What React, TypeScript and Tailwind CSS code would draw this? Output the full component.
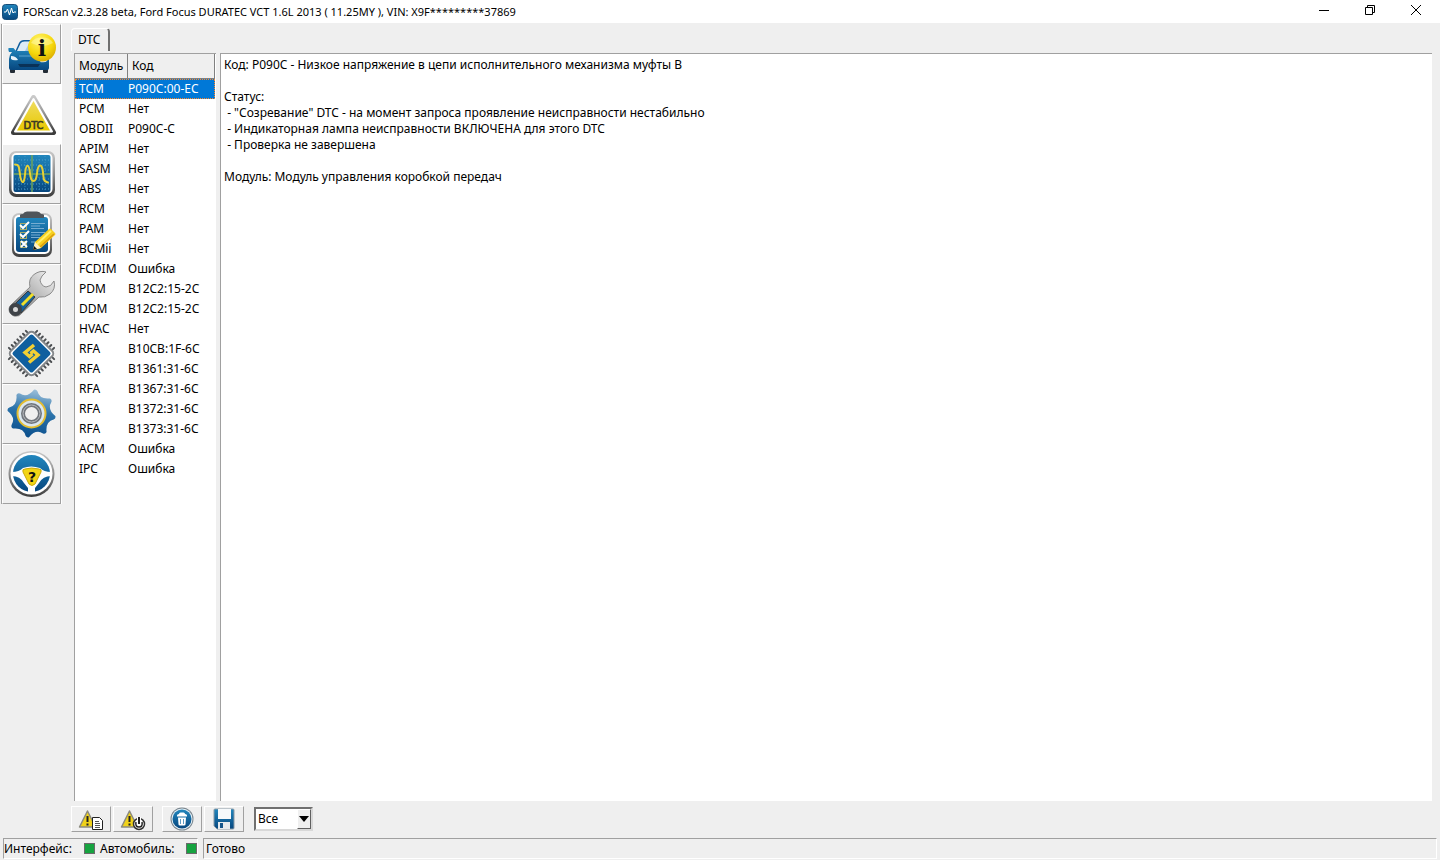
import React, { useState } from "react";
import clsx from "clsx";

interface DtcRow {
  module: string;
  code: string;
}

const ROWS: DtcRow[] = [
  { module: "TCM", code: "P090C:00-EC" },
  { module: "PCM", code: "Нет" },
  { module: "OBDII", code: "P090C-C" },
  { module: "APIM", code: "Нет" },
  { module: "SASM", code: "Нет" },
  { module: "ABS", code: "Нет" },
  { module: "RCM", code: "Нет" },
  { module: "PAM", code: "Нет" },
  { module: "BCMii", code: "Нет" },
  { module: "FCDIM", code: "Ошибка" },
  { module: "PDM", code: "B12C2:15-2C" },
  { module: "DDM", code: "B12C2:15-2C" },
  { module: "HVAC", code: "Нет" },
  { module: "RFA", code: "B10CB:1F-6C" },
  { module: "RFA", code: "B1361:31-6C" },
  { module: "RFA", code: "B1367:31-6C" },
  { module: "RFA", code: "B1372:31-6C" },
  { module: "RFA", code: "B1373:31-6C" },
  { module: "ACM", code: "Ошибка" },
  { module: "IPC", code: "Ошибка" },
];

const DETAILS = `Код: P090C - Низкое напряжение в цепи исполнительного механизма муфты B

Статус:
 - "Созревание" DTC - на момент запроса проявление неисправности нестабильно
 - Индикаторная лампа неисправности ВКЛЮЧЕНА для этого DTC
 - Проверка не завершена

Модуль: Модуль управления коробкой передач`;

// shared gradients, referenced by id from every icon
function Gradients() {
  return (
    <svg className="absolute size-0" aria-hidden="true">
      <defs>
        <linearGradient id="blue" x1="0" y1="0" x2="0" y2="1">
          <stop offset="0" stopColor="#2186bd" />
          <stop offset="1" stopColor="#07477f" />
        </linearGradient>
        <linearGradient id="gear" x1="0" y1="0" x2="0" y2="1">
          <stop offset="0" stopColor="#9dc0da" />
          <stop offset="0.45" stopColor="#2b73ab" />
          <stop offset="1" stopColor="#0b4f8c" />
        </linearGradient>
        <linearGradient id="metal" x1="0" y1="0" x2="0" y2="1">
          <stop offset="0" stopColor="#c9c9c9" />
          <stop offset="0.5" stopColor="#8d8d8d" />
          <stop offset="1" stopColor="#3c3c3c" />
        </linearGradient>
        <linearGradient id="silver" x1="1" y1="0" x2="0" y2="1">
          <stop offset="0" stopColor="#f4f4f4" />
          <stop offset="0.5" stopColor="#b4b4b4" />
          <stop offset="1" stopColor="#5c5c5c" />
        </linearGradient>
        <linearGradient id="yellow" x1="0" y1="0" x2="0" y2="1">
          <stop offset="0" stopColor="#efdc5e" />
          <stop offset="1" stopColor="#e8c800" />
        </linearGradient>
        <radialGradient id="ball" cx="0.4" cy="0.25" r="0.8">
          <stop offset="0" stopColor="#fff36b" />
          <stop offset="0.6" stopColor="#f6d80c" />
          <stop offset="1" stopColor="#d9a900" />
        </radialGradient>
      </defs>
    </svg>
  );
}

function CarInfoIcon() {
  return (
    <svg viewBox="0 0 50 50" className="size-[50px]">
      <path d="M3 36h5v7q0 1-1 1H4q-1 0-1-1zM36 36h5v7q0 1-1 1h-3q-1 0-1-1z" fill="#222b35" />
      <path d="M8 23l4-9q1.500-3 5-3h14q3 0 5 3l4 9z" fill="#0f5d9d" />
      <path d="M10 22l3.500-7.500q1-2 4-2h13q2 0 3 2l3 7.500z" fill="#dcebf5" />
      <path d="M18 22l5-9.500h6l-4 9.500z" fill="#a9c9df" />
      <path d="M1.500 19h5l2.500 3h28q5 3 5 8v9q0 2-2 2H4q-2 0-2-2v-9q0-4 3-7H2q-1-2-.5-4z" fill="url(#blue)" />
      <path d="M4 27q5 0 7 4-5 1-7-1zM40 29q-5 0-7 4 5 1 7-1z" fill="#e9f3fa" />
      <path d="M12 27h14" stroke="#5ba4cf" strokeWidth="1" />
      <path d="M11 35h22l-2 3H13z" fill="#0a3257" />
      <circle cx="35" cy="18.500" r="14" fill="url(#ball)" />
      <path d="M24 14a12 9 0 0 1 22 0q-10 6-22 0z" fill="#fff9ae" opacity="0.5" />
      <text x="35" y="27" textAnchor="middle" fontFamily="DejaVu Serif, serif" fontWeight="bold" fontSize="22" fill="#111">i</text>
    </svg>
  );
}

function DtcIcon() {
  return (
    <svg viewBox="0 0 50 50" className="size-[50px]">
      <path d="M26.500 8.500L46.500 43.500H6.500z" fill="url(#metal)" stroke="url(#metal)" strokeWidth="5" strokeLinejoin="round" />
      <path d="M26.500 10L45 42.500H8z" fill="#fff" stroke="#fff" strokeWidth="2" strokeLinejoin="round" />
      <path d="M26.500 12L43 41.500H10z" fill="url(#yellow)" />
      <text x="26.500" y="39.500" textAnchor="middle" fontFamily="DejaVu Sans Condensed, sans-serif" fontSize="11" fill="#3b3a22" stroke="#3b3a22" strokeWidth="0.600">DTC</text>
    </svg>
  );
}

function ScopeIcon() {
  return (
    <svg viewBox="0 0 50 50" className="size-[50px]">
      <rect x="2" y="2" width="46" height="46" rx="7" fill="url(#metal)" />
      <rect x="4.500" y="4" width="41" height="41" rx="5" fill="#fff" />
      <rect x="6.500" y="6" width="37" height="37" rx="2" fill="url(#blue)" />
      <path d="M8 11h35M8 16h35M8 21h35M8 30h35M8 35h35M8 40h35" stroke="#4b9fcb" strokeWidth="1" strokeDasharray="1 2" />
      <path d="M12 7v35M18 7v35M32 7v35M38 7v35" stroke="#4b9fcb" strokeWidth="1" strokeDasharray="1 2" opacity="0.7" />
      <path d="M7 25h36M25 6v37" stroke="#6da45e" strokeWidth="1.500" />
      <path d="M8 15.500c4 0 4 2 5 10s4 12 5 0 4-11 5-1 6 10 7 0 5-11 6-1 1 8 5 10" fill="none" stroke="#e8d034" strokeWidth="2" strokeLinecap="round" />
    </svg>
  );
}

function ChecklistIcon() {
  return (
    <svg viewBox="0 0 50 50" className="size-[50px]">
      <rect x="5" y="4" width="40" height="44" rx="7" fill="url(#metal)" />
      <rect x="7" y="6" width="36" height="39" rx="5" fill="#fff" />
      <rect x="9" y="8" width="32" height="35" rx="3" fill="url(#blue)" />
      <path d="M13 9V6q0-1 3-1 1-2.500 4-2.500h10q3 0 4 2.500 3 0 3 1v3z" fill="#50555a" />
      <g fill="none" stroke="#a6aa68" strokeWidth="1">
        <rect x="13.500" y="14.500" width="6" height="6" />
        <rect x="13.500" y="23.500" width="6" height="6" />
        <rect x="13.500" y="32.500" width="6" height="6" />
      </g>
      <path d="M13 16l3 3 6-6M13 25l3 3 6-6M14 32l6 6M20 32l-6 6" fill="none" stroke="#fff" strokeWidth="2" />
      <path d="M24 14.500h14M24 17h9M24 19.500h13M24 23.500h14M24 26h9M24 28.500h11M24 33h7" stroke="#76add2" strokeWidth="1" />
      <path d="M26 41l2-8 14-13q1-1 2 0l4 4q1 1 0 2L34 39z" fill="#f7cf1e" />
      <path d="M30 35l14-13" stroke="#fff06a" strokeWidth="2" />
      <path d="M33 38l14-13" stroke="#d99c10" strokeWidth="1.500" />
      <path d="M26 41l2-8 6 6z" fill="#fff0c5" />
      <path d="M26 41l1-4 3 3z" fill="#111" />
    </svg>
  );
}

function WrenchIcon() {
  return (
    <svg viewBox="0 0 50 50" className="size-[50px]">
      <path d="M4 36L23 18q-2-8 4-12.500 6-4.500 12-2.500-5 4-6 8 1 6 6 7 5 0 8-6 2 8-4 13-5 4-11 3L15 44q-3 4-8 3-5-2-5-7 0-2 2-4z" fill="url(#silver)" stroke="#8a8a8a" strokeWidth="1" />
      <path d="M7 36l14-14 7 6-14 16z" fill="#18629b" stroke="#3a3a3a" strokeWidth="1" />
      <path d="M15 36l11-11" stroke="#f0df28" strokeWidth="3" />
      <circle cx="8.500" cy="40.500" r="4.500" fill="#d9d9d9" stroke="#3f4348" strokeWidth="4" />
    </svg>
  );
}

function ChipIcon() {
  const pins = [-12, -8, -4, 0, 4, 8, 12];
  return (
    <svg viewBox="0 0 50 50" className="size-[50px]">
      <g transform="translate(24.500 24.500) rotate(45)">
        {pins.map(p => (
          <path key={p} d={`M${p} -20V20M-20 ${p}H20`} stroke="#4c4f52" strokeWidth="2" strokeLinecap="round" />
        ))}
        <rect x="-17.500" y="-17.500" width="35" height="35" rx="5" fill="#85888b" />
        <rect x="-15.500" y="-15.500" width="31" height="31" rx="3" fill="#fff" />
        <rect x="-14" y="-14" width="28" height="28" rx="2" fill="#0f5f9f" />
      </g>
      <path d="M27 16l-9 7.500 4.500 4 3-2.500M22 33.500l9-7.500-4.500-4-3 2.500" fill="none" stroke="#f2cf33" strokeWidth="3.500" />
    </svg>
  );
}

// eight pointed teeth joined by round valleys
function gearPath(cx: number, cy: number) {
  const at = (deg: number, r: number) => {
    const a = (deg * Math.PI) / 180;
    return `${(cx + r * Math.cos(a)).toFixed(1)} ${(cy + r * Math.sin(a)).toFixed(1)}`;
  };
  let d = `M${at(-4, 24)}`;
  for (let t = 0; t < 360; t += 45) {
    d += `Q${at(t + 1, 25)} ${at(t + 5, 23)}Q${at(t + 20, 16)} ${at(t + 41, 24)}`;
  }
  return d + "Z";
}

function GearIcon() {
  return (
    <svg viewBox="0 0 50 50" className="size-[50px]">
      <path d={gearPath(24.5, 24.5)} fill="url(#gear)" transform="rotate(10 24.500 24.500)" />
      <circle cx="24.500" cy="24.500" r="14" fill="#dbe7ef" stroke="#e3bd31" strokeWidth="2" />
      <circle cx="24.500" cy="24.500" r="8.500" fill="#f0f0f0" stroke="#70757b" strokeWidth="4" />
      <circle cx="24.500" cy="24.500" r="8.500" fill="none" stroke="#b9bcc0" strokeWidth="1" />
    </svg>
  );
}

function WheelIcon() {
  return (
    <svg viewBox="0 0 50 50" className="size-[50px]">
      <circle cx="24.500" cy="25" r="23" fill="url(#metal)" />
      <circle cx="24.500" cy="24.500" r="21" fill="#fff" />
      <circle cx="24.500" cy="24.500" r="18.500" fill="url(#blue)" />
      <path d="M5 23q7 0 11-4 8-3 17 0 4 4 11 4v4q-8 0-12 7l-4 5v5h-7v-5l-4-5q-4-7-12-7z" fill="#fff" />
      <path d="M18 20q6-2 14 0 3 0 2 3l-6 12q-3 3-6 0l-6-12q-1-3 2-3z" fill="#f3d515" stroke="#c9a90d" strokeWidth="1" />
      <text x="25" y="33" textAnchor="middle" fontFamily="DejaVu Sans, sans-serif" fontWeight="bold" fontSize="14" fill="#111">?</text>
    </svg>
  );
}

function WarnTriangle() {
  return (
    <>
      <path d="M10.500 4L18.500 20H2.500z" fill="#f0d21a" stroke="#8b8a80" strokeWidth="1.500" strokeLinejoin="round" />
      <path d="M10.500 9v6M10.500 16.500v2" stroke="#222" strokeWidth="2" />
    </>
  );
}

function ReadDtcIcon() {
  return (
    <svg viewBox="0 0 28 24" className="h-6 w-7">
      <WarnTriangle />
      <path d="M15.500 10.500h7l3 3v9h-10z" fill="#fff" stroke="#222" strokeWidth="1" />
      <path d="M18 14.500h4M18 16.500h5M18 18.500h5M18 20.500h5" stroke="#555" strokeWidth="1" />
    </svg>
  );
}

function ResetDtcIcon() {
  return (
    <svg viewBox="0 0 28 24" className="h-6 w-7">
      <WarnTriangle />
      <circle cx="20" cy="17" r="5.500" fill="#fff" stroke="#333" strokeWidth="1.500" />
      <path d="M17 15q-1 5 3 5t3-5" fill="none" stroke="#222" strokeWidth="1.500" />
      <path d="M20 10v7" stroke="#fff" strokeWidth="4" />
      <path d="M20 10v7" stroke="#222" strokeWidth="2" />
    </svg>
  );
}

function TrashIcon() {
  return (
    <svg viewBox="0 0 24 24" className="size-6">
      <circle cx="12" cy="12" r="11.500" fill="#7b8790" />
      <circle cx="12" cy="12" r="10.500" fill="#e6f0f6" />
      <circle cx="12" cy="12" r="9.500" fill="url(#blue)" />
      <path d="M7 8.500q0-1.500 2-1.500 0-1.500 1.500-1.500h3Q15 5.500 15 7q2 0 2 1.500v1H7z" fill="#fff" />
      <path d="M8 10.500h8l-.5 7q0 1-1.500 1h-4q-1.500 0-1.500-1z" fill="#fff" />
      <path d="M10.500 12v5M13.500 12v5" stroke="#5d9bc4" strokeWidth="1" />
    </svg>
  );
}

function SaveIcon() {
  return (
    <svg viewBox="0 0 24 24" className="size-6">
      <path d="M2 3q0-1 1-1h18q1 0 1 1v18q0 1-1 1H5l-3-3z" fill="url(#blue)" stroke="#8999a5" strokeWidth="1" />
      <path d="M6 2h13v10H6z" fill="#f6f9fb" />
      <path d="M6 15h12v7H6z" fill="#e5eaee" />
      <path d="M8 16h3v5H8z" fill="#14548a" />
    </svg>
  );
}

const NAV = [
  { id: "vehicle", label: "Автомобиль", Icon: CarInfoIcon },
  { id: "dtc", label: "DTC", Icon: DtcIcon },
  { id: "scope", label: "Осциллограф", Icon: ScopeIcon },
  { id: "tests", label: "Тесты", Icon: ChecklistIcon },
  { id: "service", label: "Сервис", Icon: WrenchIcon },
  { id: "modules", label: "Конфигурация", Icon: ChipIcon },
  { id: "settings", label: "Настройки", Icon: GearIcon },
  { id: "help", label: "Справка", Icon: WheelIcon },
];

function TitleBar() {
  return (
    <header className="flex h-[23px] shrink-0 items-center bg-white">
      <svg viewBox="0 0 16 16" className="ml-0.5 size-4" aria-hidden="true">
        <rect x="0.500" y="0.500" width="15" height="15" rx="3" fill="url(#blue)" stroke="#174d79" />
        <path d="M2 8h2l1.500-3 2 6 2-7 1.500 5 1-1h2" fill="none" stroke="#fff" strokeWidth="1" />
      </svg>
      <h1 className="ml-[5px] flex-1 whitespace-nowrap text-[11px]">
        FORScan v2.3.28 beta, Ford Focus DURATEC VCT 1.6L 2013 ( 11.25MY ), VIN: X9F*********37869
      </h1>
      <div className="flex h-full">
        <button aria-label="Свернуть" className="flex w-[46px] items-center justify-center pb-1">
          <svg viewBox="0 0 12 12" className="size-3"><path d="M1 6.500h10" stroke="#000" /></svg>
        </button>
        <button aria-label="Восстановить" className="flex w-[45px] items-center justify-center pb-1">
          <svg viewBox="0 0 12 12" className="size-3">
            <path d="M1.500 3.500h7v7h-7zM3.500 3.500v-2h7v7h-2" fill="none" stroke="#000" />
          </svg>
        </button>
        <button aria-label="Закрыть" className="flex w-12 items-center justify-center pb-1">
          <svg viewBox="0 0 12 12" className="size-3"><path d="M1 1l10 10M11 1L1 11" stroke="#000" /></svg>
        </button>
      </div>
    </header>
  );
}

function ToolButton({ label, children }: { label: string; children: React.ReactNode }) {
  return (
    <button aria-label={label} className="flex h-[26px] w-10 items-center justify-center border border-t-white border-l-white border-r-[#a0a0a0] border-b-[#a0a0a0]">
      {children}
    </button>
  );
}

function Lamp() {
  return <span className="size-[11px] border border-[#6a6a6a] bg-[#16a340]" />;
}

export default function App() {
  const [page, setPage] = useState("dtc");
  const [selected, setSelected] = useState(0);

  return (
    <div className="flex h-screen flex-col bg-[#efefef] font-['Noto_Sans',sans-serif] text-[12px] leading-4 text-black">
      <Gradients />
      <TitleBar />

      <div className="flex min-h-0 flex-1">
        <nav className="ml-px mt-px w-[61px] shrink-0 self-start border-l border-l-[#a0a0a0] border-r border-r-white">
          {NAV.map(({ id, label, Icon }) => (
            <button
              key={id}
              aria-label={label}
              onClick={() => setPage(id)}
              className={clsx(
                "flex h-[60px] w-full items-center justify-center border border-t-white border-l-white",
                page === id ? "border-r-white border-b-white bg-white" : "border-r-[#a0a0a0] border-b-[#a0a0a0]"
              )}
            >
              <Icon />
            </button>
          ))}
        </nav>

        <main className="flex min-w-0 flex-1 flex-col pl-[9px] pr-2">
          <div className="flex h-[30px] items-end pb-[2px]">
            <button className="h-[23px] rounded-t-sm border-t border-l border-t-white border-l-white border-r-2 border-r-[#707070] pl-[6px] pr-2">
              DTC
            </button>
          </div>

          <div className="ml-[3px] flex min-h-0 flex-1 gap-1">
            <div className="w-[142px] shrink-0 border-t border-l border-[#a0a0a0] bg-white pr-px">
              <table className="w-full table-fixed border-separate border-spacing-0 text-left">
                <thead>
                  <tr className="h-[25px] bg-[#efefef]">
                    <th className="w-[53px] border-b border-r border-[#808080] pl-1 font-normal">Модуль</th>
                    <th className="border-b border-r border-[#808080] pl-1 font-normal">Код</th>
                  </tr>
                </thead>
                <tbody>
                  {ROWS.map((row, i) => (
                    <tr
                      key={i}
                      onClick={() => setSelected(i)}
                      className={clsx(
                        "h-5",
                        selected === i && "bg-[#0078d7] text-white outline-1 -outline-offset-1 outline-dotted outline-[#ff8728]"
                      )}
                    >
                      <td className="pl-1">{row.module}</td>
                      <td>{row.code}</td>
                    </tr>
                  ))}
                </tbody>
              </table>
            </div>

            <section className="min-w-0 flex-1 overflow-auto whitespace-pre-wrap border-t border-l border-[#a0a0a0] bg-white px-[3px] py-[3px]">
              {DETAILS}
            </section>
          </div>

          <div className="flex h-9 shrink-0 items-center">
            <div className="flex gap-0.5">
              <ToolButton label="Прочитать DTC"><ReadDtcIcon /></ToolButton>
              <ToolButton label="Сбросить DTC"><ResetDtcIcon /></ToolButton>
            </div>
            <div className="ml-[9px] flex gap-0.5">
              <ToolButton label="Очистить"><TrashIcon /></ToolButton>
              <ToolButton label="Сохранить"><SaveIcon /></ToolButton>
            </div>
            <div className="relative ml-[10px]">
              <select
                aria-label="Фильтр"
                className="block h-6 w-[59px] appearance-none border-2 border-t-[#707070] border-l-[#707070] border-r-[#d8d8d8] border-b-[#d8d8d8] bg-white pl-0.5 outline-none"
              >
                <option>Все</option>
                <option>DTC</option>
              </select>
              <span className="pointer-events-none absolute inset-y-0.5 right-0.5 flex w-[14px] items-center justify-center border border-t-white border-l-white border-r-[#606060] border-b-[#606060] bg-[#efefef]">
                <svg viewBox="0 0 10 6" className="h-[6px] w-[10px] shrink-0"><path d="M0 0h10L5 6z" fill="#000" /></svg>
              </span>
            </div>
          </div>
        </main>
      </div>

      <footer className="mb-px flex h-[22px] shrink-0 gap-[5px] pt-px pl-[3px] pr-[3px]">
        <div className="flex w-[195px] items-center border border-t-[#a0a0a0] border-l-[#a0a0a0] border-r-white border-b-white">
          <span className="w-20">Интерфейс:</span>
          <Lamp />
          <span className="ml-[5px] w-[86px]">Автомобиль:</span>
          <Lamp />
        </div>
        <div className="flex flex-1 items-center border border-t-[#a0a0a0] border-l-[#a0a0a0] border-r-white border-b-white pl-0.5">
          Готово
        </div>
      </footer>
    </div>
  );
}
